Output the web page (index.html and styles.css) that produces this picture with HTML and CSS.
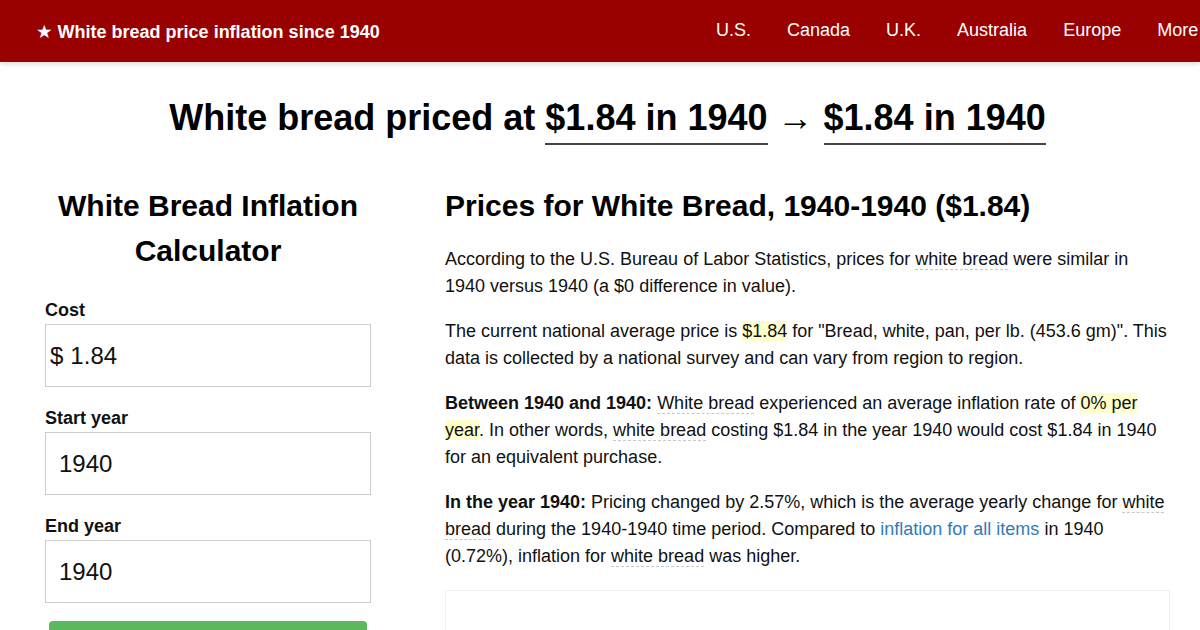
FILE: index.html
```html
<!DOCTYPE html>
<html lang="en">
<head>
<meta charset="utf-8">
<title>White bread price inflation since 1940</title>
<link rel="stylesheet" href="styles.css">
</head>
<body>
<header class="topbar">
  <a class="brand" href="#"><span class="star">★</span> White bread price inflation since 1940</a>
  <nav class="nav">
    <a href="#">U.S.</a>
    <a href="#">Canada</a>
    <a href="#">U.K.</a>
    <a href="#">Australia</a>
    <a href="#">Europe</a>
    <a href="#">More <span class="caret">▾</span></a>
  </nav>
</header>
<main class="page">
  <h1 class="title">White bread priced at <span class="u">$1.84 in 1940</span> <span class="arrow">→</span> <span class="u">$1.84 in 1940</span></h1>
  <div class="cols">
    <section class="calc">
      <h2 class="calc-title">White Bread Inflation Calculator</h2>
      <label class="lbl">Cost</label>
      <div class="field cost"><span class="cur">$</span><input class="inp inp-cost" type="text" value="1.84"></div>
      <label class="lbl">Start year</label>
      <div class="field"><input class="inp" type="text" value="1940"></div>
      <label class="lbl">End year</label>
      <div class="field"><input class="inp" type="text" value="1940"></div>
      <button class="btn" type="button">Calculate</button>
    </section>
    <section class="content">
      <h2 class="content-title">Prices for White Bread, 1940-1940 ($1.84)</h2>
      <p>According to the U.S. Bureau of Labor Statistics, prices for <span class="term">white bread</span> were similar in 1940 versus 1940 (a $0 difference in value).</p>
      <p>The current national average price is <span class="hl">$1.84</span> for "Bread, white, pan, per lb. (453.6 gm)". This data is collected by a national survey and can vary from region to region.</p>
      <p><strong>Between 1940 and 1940:</strong> <span class="term">White bread</span> experienced an average inflation rate of <span class="hl">0% per year</span>. In other words, <span class="term">white bread</span> costing $1.84 in the year 1940 would cost $1.84 in 1940 for an equivalent purchase.</p>
      <p><strong>In the year 1940:</strong> Pricing changed by 2.57%, which is the average yearly change for <span class="term">white bread</span> during the 1940-1940 time period. Compared to <a class="link" href="#">inflation for all items</a> in 1940 (0.72%), inflation for <span class="term">white bread</span> was higher.</p>
      <div class="chart-box"></div>
    </section>
  </div>
</main>
</body>
</html>
```

FILE: styles.css
```css
* { box-sizing: border-box; }
html, body { margin: 0; padding: 0; }
body {
  font-family: "Liberation Sans", Arial, sans-serif;
  color: #111;
  background: #fff;
  width: 1200px;
  height: 630px;
  overflow: hidden;
}
.topbar {
  display: flex;
  align-items: center;
  height: 62px;
  background: #990000;
  padding-left: 36px;
  padding-top: 1px;
  box-shadow: 0 2px 5px rgba(0,0,0,0.15);
  white-space: nowrap;
  overflow: hidden;
  position: relative;
  z-index: 1;
}
.brand {
  flex: 0 0 662px;
  color: #fff;
  font-weight: bold;
  font-size: 18px;
  text-decoration: none;
  line-height: 61px;
}
.star { font-family: "DejaVu Sans", sans-serif; font-size: 18.5px; }
.nav { display: flex; flex: 0 0 auto; }
.nav a {
  color: #fff;
  text-decoration: none;
  font-size: 18px;
  padding: 0 18px;
  line-height: 61px;
}
.caret { font-size: 12px; }
.page {
  padding: 0 30px 0 45px;
}
.title {
  margin: 34px 0 0;
  text-align: center;
  font-size: 36px;
  line-height: 43px;
  font-weight: bold;
  color: #000;
}
.u {
  display: inline-block;
  border-bottom: 2px solid #444;
  padding-bottom: 4px;
}
.arrow { font-weight: normal; }
.cols {
  display: grid;
  grid-template-columns: 326px 725px;
  column-gap: 74px;
  margin-top: 38px;
}
.calc-title, .content-title {
  font-size: 30px;
  line-height: 45px;
  font-weight: bold;
  margin: 0;
  color: #000;
}
.calc-title { text-align: center; margin-bottom: 24px; }
.content-title { margin-bottom: 18px; }
.lbl {
  display: block;
  font-weight: bold;
  font-size: 18px;
  line-height: 27px;
  margin-bottom: 0;
}
.field {
  display: flex;
  align-items: center;
  height: 63px;
  border: 1px solid #ccc;
  margin-bottom: 18px;
  background: #fff;
}
.cur { font-size: 24px; padding-left: 4px; color: #111; }
.inp {
  border: 0;
  outline: none;
  background: transparent;
  font-family: "Liberation Sans", Arial, sans-serif;
  font-size: 24px;
  color: #111;
  width: 100%;
  height: 100%;
  padding: 0 0 0 13px;
}
.inp-cost { padding-left: 7px; }
.btn {
  display: block;
  width: 318px;
  margin: 18px 4px 0;
  height: 52px;
  border: 0;
  border-radius: 4px;
  background: #5cb85c;
  color: #fff;
  font-family: "Liberation Sans", Arial, sans-serif;
  font-size: 20px;
}
.content p {
  font-size: 18px;
  line-height: 27px;
  margin: 0 0 18px;
  color: #111;
}
.content strong { color: #111; }
.term { border-bottom: 1px dashed #c8c8c8; }
.hl { background: #ffffcc; }
.link { color: #337ab7; text-decoration: none; }
.chart-box {
  margin-top: 20px;
  height: 200px;
  border: 1px solid #eee;
  width: 100%;
}
```
